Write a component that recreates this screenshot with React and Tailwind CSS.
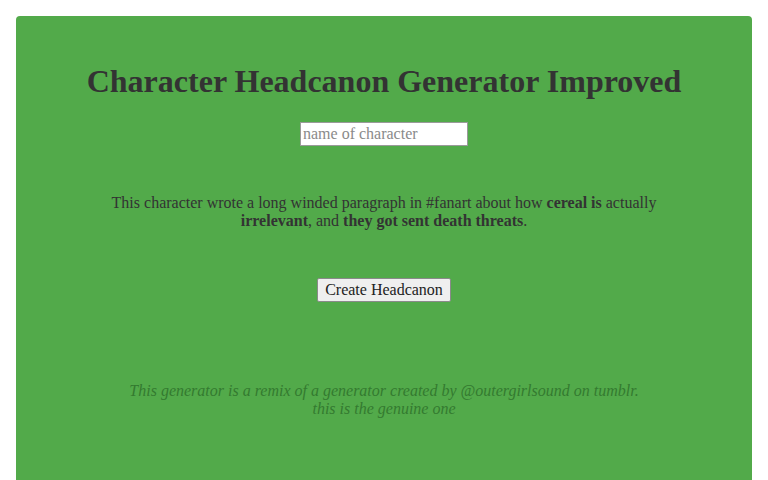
export default function App() {
  return (
    <div className="min-h-[480px] bg-white px-4 pt-4 font-['Liberation_Serif',serif]">
      <div className="h-[464px] rounded-t-[4px] bg-[#52aa4a] text-center text-[#333333]">
        <h1 className="pt-[45px] text-[32px] font-bold leading-[40px]">
          Character Headcanon Generator Improved
        </h1>
        <div className="mt-[21px] flex justify-center">
          <input
            type="text"
            placeholder="name of character"
            className="h-[24px] w-[168px] border border-[#9a9a9a] bg-white px-[2px] text-[16px] leading-[20px] text-black placeholder:text-[#8a8a8a]"
          />
        </div>
        <p className="mx-auto mt-[48px] w-[560px] text-[16px] leading-[18px]">
          This character wrote a long winded paragraph in #fanart about how <b>cereal is</b> actually{' '}
          <b>irrelevant</b>, and <b>they got sent death threats</b>.
        </p>
        <div className="mt-[48px] flex justify-center">
          <button className="h-[24px] rounded-[2px] border border-[#8a8a8a] bg-[#efefef] px-[7px] text-[16px] leading-[20px] text-[#222]">
            Create Headcanon
          </button>
        </div>
        <p className="mt-[80px] text-[16px] italic leading-[18px] text-[#347a30]">
          This generator is a remix of a generator created by @outergirlsound on tumblr.
          <br />
          this is the genuine one
        </p>
      </div>
    </div>
  );
}
